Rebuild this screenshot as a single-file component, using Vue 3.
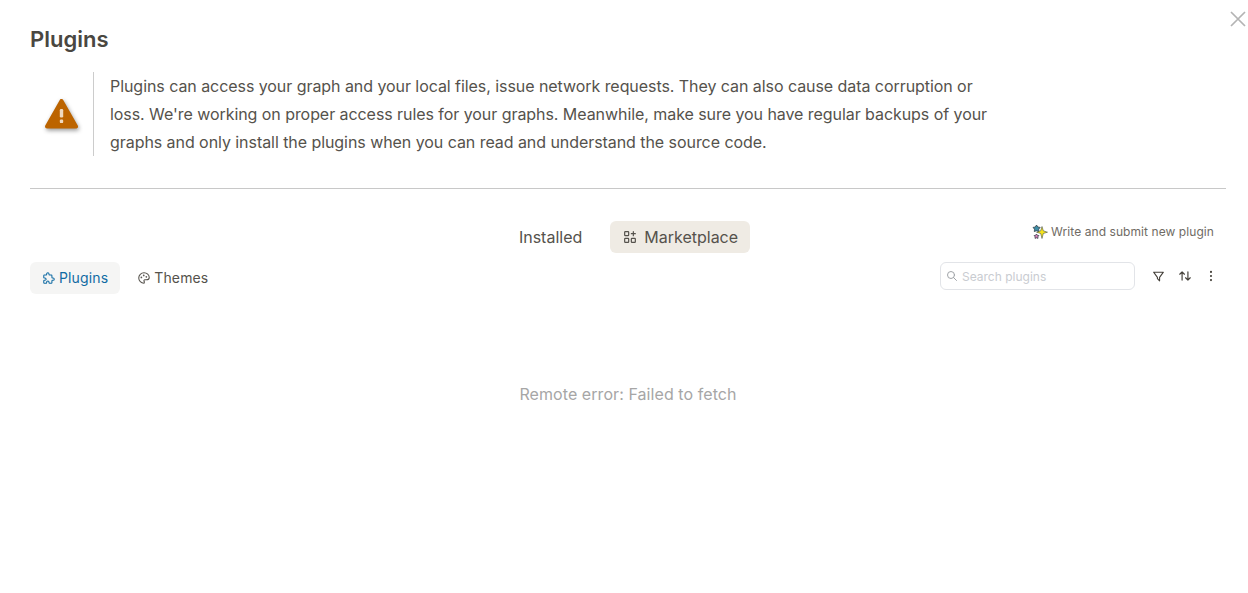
<template>
  <div class="page">
    <button class="close" aria-label="Close">
      <svg width="16" height="16" viewBox="0 0 16 16" fill="none" stroke="#b4b4b4" stroke-width="1.7">
        <path d="M1 1l14 14M15 1L1 15" />
      </svg>
    </button>

    <h1 class="title">Plugins</h1>

    <div class="notice">
      <div class="notice-icon">
        <svg width="36" height="34" viewBox="0 0 36 34">
          <path d="M18.500 4L33 29.500H4z" fill="#bc6400" stroke="#bc6400" stroke-width="4" stroke-linejoin="round" />
          <rect x="16.800" y="12" width="3.400" height="8.500" rx="1.200" fill="#efd9c0" />
          <rect x="16.800" y="22.500" width="3.400" height="3.600" rx="1.200" fill="#efd9c0" />
        </svg>
      </div>
      <p class="notice-text">
        Plugins can access your graph and your local files, issue network requests. They can also cause data corruption or
        loss. We're working on proper access rules for your graphs. Meanwhile, make sure you have regular backups of your
        graphs and only install the plugins when you can read and understand the source code.
      </p>
    </div>

    <hr class="divider" />

    <div class="tabs-row">
      <div class="tabs">
        <a class="tab">Installed</a>
        <a class="tab active">
          <svg width="16" height="16" viewBox="0 0 24 24" fill="none" stroke="currentColor" stroke-width="1.800" stroke-linecap="round" stroke-linejoin="round">
            <rect x="4" y="4" width="6" height="6" rx="1" />
            <rect x="4" y="14" width="6" height="6" rx="1" />
            <rect x="14" y="14" width="6" height="6" rx="1" />
            <path d="M14 7h6M17 4v6" />
          </svg>
          Marketplace
        </a>
      </div>
      <a class="submit-link">
        <svg width="16" height="16" viewBox="0 0 16 16">
          <path d="M4.500 1l1.400 2 2.300.4-1.500 1.800.2 2.400-2.400-.9-2.200.9.2-2.400L1 3.400l2.300-.4z" fill="#3f8fa8" stroke="#27343b" stroke-width=".7" />
          <path d="M4.500 10l.9 1.300 1.500.3-1 1.200.1 1.600-1.500-.6-1.500.6.1-1.600-1-1.200 1.500-.3z" fill="#d77fb8" stroke="#27343b" stroke-width=".7" />
          <path d="M10 2.500l1.300 4.300 4.200 1.400-4.200 1.300L10 14.500 8.700 9.500 4.500 8.200l4.200-1.400z" fill="#f5e31f" stroke="#27343b" stroke-width=".5" />
        </svg>
        Write and submit new plugin
      </a>
    </div>

    <div class="toolbar">
      <div class="kinds">
        <a class="kind selected">
          <svg width="14" height="14" viewBox="0 0 24 24" fill="none" stroke="currentColor" stroke-width="1.800" stroke-linejoin="round">
            <path d="M4 7h3a1 1 0 0 0 1-1V5a2 2 0 0 1 4 0v1a1 1 0 0 0 1 1h3a1 1 0 0 1 1 1v3a1 1 0 0 0 1 1h1a2 2 0 0 1 0 4h-1a1 1 0 0 0-1 1v3a1 1 0 0 1-1 1h-3a1 1 0 0 1-1-1v-1a2 2 0 0 0-4 0v1a1 1 0 0 1-1 1H4a1 1 0 0 1-1-1v-3a1 1 0 0 1 1-1h1a2 2 0 0 0 0-4H4a1 1 0 0 1-1-1V8a1 1 0 0 1 1-1" />
          </svg>
          Plugins
        </a>
        <a class="kind">
          <svg width="14" height="14" viewBox="0 0 24 24" fill="none" stroke="currentColor" stroke-width="1.800" stroke-linecap="round" stroke-linejoin="round">
            <path d="M12 21a9 9 0 1 1 0-18c5 0 9 3.600 9 8 0 2.800-2.200 4-5 4h-2.500a1.700 1.700 0 0 0-1.200 2.900c.6.700.2 3.100-.3 3.100z" />
            <circle cx="7.500" cy="11" r=".6" />
            <circle cx="11.500" cy="7.500" r=".6" />
            <circle cx="16" cy="10" r=".6" />
          </svg>
          Themes
        </a>
      </div>

      <div class="controls">
        <label class="search">
          <svg width="12" height="12" viewBox="0 0 24 24" fill="none" stroke="#a0a4a8" stroke-width="2" stroke-linecap="round">
            <circle cx="10" cy="10" r="7" />
            <path d="M21 21l-6-6" />
          </svg>
          <input type="text" placeholder="Search plugins" />
        </label>
        <div class="actions">
          <a class="action">
            <svg width="13" height="13" viewBox="0 0 24 24" fill="none" stroke="currentColor" stroke-width="2" stroke-linejoin="round">
              <path d="M3 4h18l-7 9.500V20l-4-4v-2.500z" />
            </svg>
          </a>
          <a class="action">
            <svg width="14" height="14" viewBox="0 0 24 24" fill="none" stroke="currentColor" stroke-width="2" stroke-linecap="round" stroke-linejoin="round">
              <path d="M3 9l4-4 4 4M7 5v14M21 15l-4 4-4-4M17 19V5" />
            </svg>
          </a>
          <a class="action">
            <svg width="14" height="14" viewBox="0 0 24 24" fill="currentColor">
              <circle cx="12" cy="5" r="1.800" />
              <circle cx="12" cy="12" r="1.800" />
              <circle cx="12" cy="19" r="1.800" />
            </svg>
          </a>
        </div>
      </div>
    </div>

    <div class="remote-error">Remote error: Failed to fetch</div>
  </div>
</template>

<script setup>
</script>

<style>
html,
body {
  margin: 0;
  background: #fff;
}
</style>

<style scoped>
.page {
  position: relative;
  box-sizing: border-box;
  height: 593px;
  padding: 24px 22px 0 30px;
  font-family: Inter, "Noto Sans", sans-serif;
  color: #433f38;
  overflow: hidden;
}
.close {
  position: absolute;
  top: 11px;
  right: 2px;
  padding: 0;
  border: 0;
  background: none;
  line-height: 0;
}
.title {
  margin: 0;
  font-size: 22px;
  line-height: 30px;
  font-weight: 600;
  color: #4a4741;
}
.notice {
  display: flex;
  align-items: center;
  margin-top: 18px;
  height: 84px;
}
.notice-icon {
  width: 62px;
  height: 84px;
  border-right: 1px solid #ccc;
  display: flex;
  align-items: center;
  justify-content: center;
  padding-right: 1px;
  box-sizing: content-box;
}
.notice-icon svg {
  filter: drop-shadow(1px 2px 2px rgba(0, 0, 0, 0.4));
}
.notice-text {
  margin: 0 0 0 16px;
  width: 885px;
  font-size: 16px;
  line-height: 28px;
  letter-spacing: -0.06px;
  color: #55524c;
}
.divider {
  margin: 32px 0 0;
  border: 0;
  border-top: 1px solid #c8c8c8;
}
.tabs-row {
  position: relative;
  display: flex;
  justify-content: center;
  margin-top: 32px;
  height: 32px;
}
.tabs {
  display: flex;
  gap: 16px;
  margin-left: 1px;
}
.tab {
  display: flex;
  align-items: center;
  gap: 6px;
  padding: 0 12px;
  border-radius: 6px;
  font-size: 16px;
  color: #55524c;
}
.tab.active {
  background: #efebe4;
}
.submit-link {
  position: absolute;
  right: 12px;
  top: 2px;
  display: flex;
  align-items: center;
  gap: 3px;
  font-size: 12px;
  line-height: 18px;
  letter-spacing: 0.07px;
  color: #6f6b64;
}
.toolbar {
  display: flex;
  justify-content: space-between;
  align-items: center;
  margin-top: 9px;
  height: 32px;
}
.kinds {
  display: flex;
  gap: 5px;
}
.kind {
  display: flex;
  align-items: center;
  gap: 3px;
  height: 32px;
  padding: 0 12px 1px;
  box-sizing: border-box;
  border-radius: 6px;
  font-size: 14px;
  letter-spacing: 0.14px;
  color: #55524c;
}
.kind.selected {
  background: #f5f5f4;
  color: #106ba3;
}
.controls {
  display: flex;
  align-items: center;
  margin-top: -4px;
}
.search {
  display: flex;
  align-items: center;
  gap: 4px;
  box-sizing: border-box;
  width: 195px;
  height: 28px;
  padding: 0 5px;
  border: 1px solid #e2e4e8;
  border-radius: 6px;
}
.search input {
  flex: 1;
  min-width: 0;
  padding: 0;
  border: 0;
  outline: 0;
  font-family: inherit;
  font-size: 12px;
  color: #433f38;
}
.search input::placeholder {
  color: #c9ccd1;
}
.actions {
  display: flex;
  gap: 5px;
  margin-left: 13px;
  padding-right: 5px;
}
.action {
  display: flex;
  align-items: center;
  justify-content: center;
  width: 21px;
  height: 24px;
  color: #433f38;
}
.remote-error {
  margin-top: 89px;
  text-align: center;
  font-size: 16px;
  line-height: 22px;
  letter-spacing: 0.07px;
  color: #a6a6a6;
}
</style>
